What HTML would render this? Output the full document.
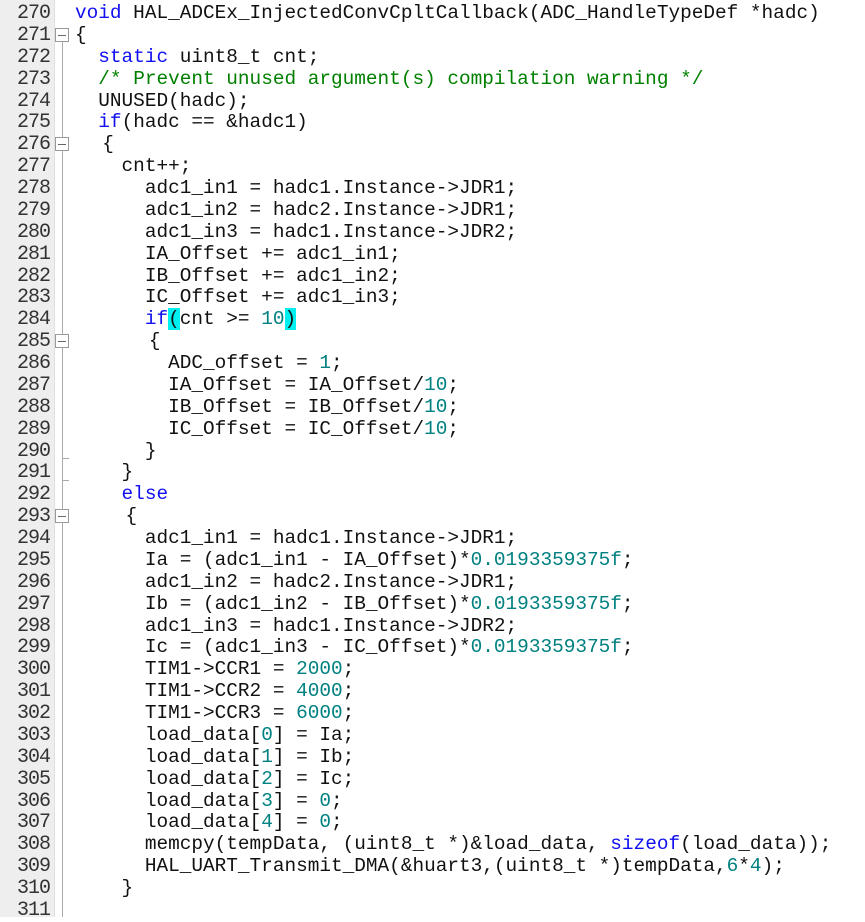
<!DOCTYPE html>
<html><head><meta charset="utf-8"><style>
html,body{margin:0;padding:0;background:#fff;width:865px;height:917px;overflow:hidden}
#g{position:absolute;left:0;top:0;width:54px;height:917px;background:#eeeeee;border-right:1px solid #e0e0e0}
#f{position:absolute;left:55px;top:0;width:17px;height:917px;background:#fff}
.ln{position:absolute;left:0;width:50px;text-align:right;font:20px/21.875px "Liberation Mono",monospace;color:#333;letter-spacing:-1px}
.code{position:absolute;left:75px;top:3px;font:19.4px/21.875px "Liberation Mono",monospace;color:#111;white-space:pre;margin:0}
.k{color:#1010f0}.c{color:#008000}.n{color:#008080}.h{background:#00f0f0}
.b{position:relative;left:4px}
.box{position:absolute;left:55px;width:12px;height:12px;border:1px solid #999;background:#fff}
.box:after{content:"";position:absolute;left:2px;top:6px;width:8px;height:1px;background:#666}
.vl{position:absolute;left:62px;width:1px;background:#aaa}
.tk{position:absolute;left:62px;width:7px;height:1px;background:#aaa}
</style></head><body>
<div id="g"></div><div id="f"></div>
<pre class="code"><span class="k">void</span> HAL_ADCEx_InjectedConvCpltCallback(ADC_HandleTypeDef *hadc)
{
  <span class="k">static</span> uint8_t cnt;
  <span class="c">/* Prevent unused argument(s) compilation warning */</span>
  UNUSED(hadc);
  <span class="k">if</span>(hadc == &amp;hadc1)
  <span class="b">{</span>
    cnt++;
      adc1_in1 = hadc1.Instance-&gt;JDR1;
      adc1_in2 = hadc2.Instance-&gt;JDR1;
      adc1_in3 = hadc1.Instance-&gt;JDR2;
      IA_Offset += adc1_in1;
      IB_Offset += adc1_in2;
      IC_Offset += adc1_in3;
      <span class="k">if</span><span class="h">(</span>cnt &gt;= <span class="n">10</span><span class="h">)</span>
      <span class="b">{</span>
        ADC_offset = <span class="n">1</span>;
        IA_Offset = IA_Offset/<span class="n">10</span>;
        IB_Offset = IB_Offset/<span class="n">10</span>;
        IC_Offset = IC_Offset/<span class="n">10</span>;
      }
    }
    <span class="k">else</span>
    <span class="b">{</span>
      adc1_in1 = hadc1.Instance-&gt;JDR1;
      Ia = (adc1_in1 - IA_Offset)*<span class="n">0.0193359375f</span>;
      adc1_in2 = hadc2.Instance-&gt;JDR1;
      Ib = (adc1_in2 - IB_Offset)*<span class="n">0.0193359375f</span>;
      adc1_in3 = hadc1.Instance-&gt;JDR2;
      Ic = (adc1_in3 - IC_Offset)*<span class="n">0.0193359375f</span>;
      TIM1-&gt;CCR1 = <span class="n">2000</span>;
      TIM1-&gt;CCR2 = <span class="n">4000</span>;
      TIM1-&gt;CCR3 = <span class="n">6000</span>;
      load_data[<span class="n">0</span>] = Ia;
      load_data[<span class="n">1</span>] = Ib;
      load_data[<span class="n">2</span>] = Ic;
      load_data[<span class="n">3</span>] = <span class="n">0</span>;
      load_data[<span class="n">4</span>] = <span class="n">0</span>;
      memcpy(tempData, (uint8_t *)&amp;load_data, <span class="k">sizeof</span>(load_data));
      HAL_UART_Transmit_DMA(&amp;huart3,(uint8_t *)tempData,<span class="n">6</span>*<span class="n">4</span>);
    }
</pre>
<div class="ln" style="top:3px">270<br>271<br>272<br>273<br>274<br>275<br>276<br>277<br>278<br>279<br>280<br>281<br>282<br>283<br>284<br>285<br>286<br>287<br>288<br>289<br>290<br>291<br>292<br>293<br>294<br>295<br>296<br>297<br>298<br>299<br>300<br>301<br>302<br>303<br>304<br>305<br>306<br>307<br>308<br>309<br>310<br>311</div>
<div class="vl" style="top:40px;height:877px"></div>
<div class="box" style="top:28px"></div>
<div class="box" style="top:137px"></div>
<div class="box" style="top:334px"></div>
<div class="box" style="top:509px"></div>
<div class="tk" style="top:458px"></div>
<div class="tk" style="top:480px"></div>
</body></html>
